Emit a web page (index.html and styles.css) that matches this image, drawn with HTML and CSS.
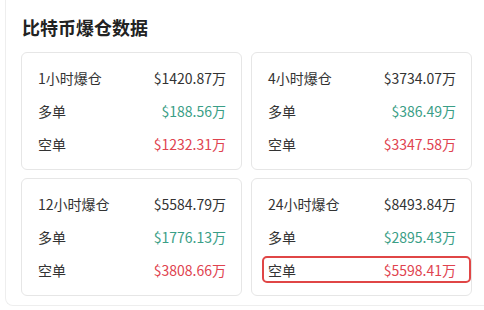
FILE: index.html
```html
<!DOCTYPE html>
<html lang="zh">
<head>
<meta charset="utf-8">
<link rel="stylesheet" href="styles.css">
</head>
<body>
<div class="panel">
  <h2 class="title">比特币爆仓数据</h2>
  <div class="grid">
    <div class="card">
      <div class="row"><span class="label">1小时爆仓</span><span class="val">$1420.87万</span></div>
      <div class="row"><span class="label">多单</span><span class="val up">$188.56万</span></div>
      <div class="row"><span class="label">空单</span><span class="val down">$1232.31万</span></div>
    </div>
    <div class="card">
      <div class="row"><span class="label">4小时爆仓</span><span class="val">$3734.07万</span></div>
      <div class="row"><span class="label">多单</span><span class="val up">$386.49万</span></div>
      <div class="row"><span class="label">空单</span><span class="val down">$3347.58万</span></div>
    </div>
    <div class="card">
      <div class="row"><span class="label">12小时爆仓</span><span class="val">$5584.79万</span></div>
      <div class="row"><span class="label">多单</span><span class="val up">$1776.13万</span></div>
      <div class="row"><span class="label">空单</span><span class="val down">$3808.66万</span></div>
    </div>
    <div class="card">
      <div class="row"><span class="label">24小时爆仓</span><span class="val">$8493.84万</span></div>
      <div class="row"><span class="label">多单</span><span class="val up">$2895.43万</span></div>
      <div class="row highlight"><span class="label">空单</span><span class="val down">$5598.41万</span></div>
    </div>
  </div>
</div>
</body>
</html>
```
FILE: styles.css
```css
html, body {
  margin: 0;
  padding: 0;
  background: #fff;
}
body {
  font-family: "Noto Sans CJK SC", "Noto Sans", sans-serif;
  color: #333;
  width: 484px;
  height: 310px;
  overflow: hidden;
}
.panel {
  margin-left: 5px;
  height: 306px;
  box-sizing: border-box;
  border-left: 1px solid #eeeeee;
  border-bottom: 1px solid #eeeeee;
  border-bottom-left-radius: 8px;
  padding: 15px 0 0 15px;
}
.title {
  margin: 0 0 13px 1px;
  font-size: 18px;
  line-height: 24px;
  font-weight: 700;
  color: #222;
}
.grid {
  display: grid;
  grid-template-columns: 221px 221px;
  column-gap: 9px;
  row-gap: 8px;
}
.card {
  border: 1px solid #e6e6e6;
  border-radius: 6px;
  padding: 8px 15px 10px 16px;
  height: 118px;
  box-sizing: border-box;
}
.row {
  display: flex;
  justify-content: space-between;
  align-items: center;
  height: 33px;
  font-size: 14px;
  position: relative;
}
.label {
  color: #333;
}
.val {
  color: #333;
}
.up {
  color: #3a9e86;
}
.down {
  color: #e0434f;
}
.highlight::after {
  content: "";
  position: absolute;
  left: -6px;
  right: -15px;
  top: 3px;
  bottom: 3px;
  border: 2px solid #e04646;
  border-radius: 5px;
}
```
